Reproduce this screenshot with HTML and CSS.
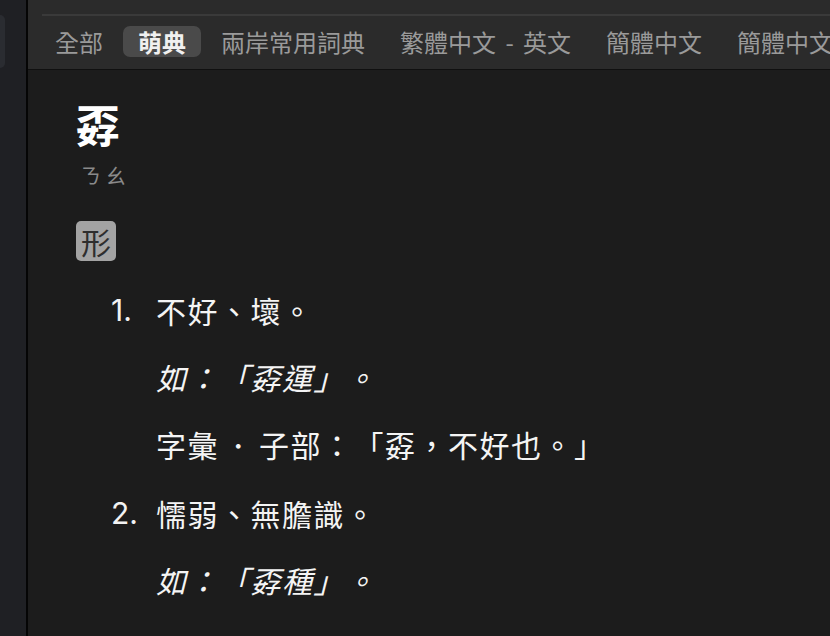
FILE: index.html
```html
<!DOCTYPE html>
<html lang="zh-Hant">
<head>
<meta charset="utf-8">
<title>孬 - 萌典</title>
<link rel="stylesheet" href="styles.css">
</head>
<body>
<div class="app">
  <aside class="sidebar">
    <div class="side-item"></div>
  </aside>
  <main class="main">
    <header class="toolbar">
      <div class="rule"></div>
      <nav class="tabs">
        <span class="tab">全部</span>
        <span class="tab active">萌典</span>
        <span class="tab">兩岸常用詞典</span>
        <span class="tab wide">繁體中文 - 英文</span>
        <span class="tab">簡體中文</span>
        <span class="tab">簡體中文</span>
      </nav>
    </header>
    <section class="content">
      <h1 class="head">孬</h1>
      <div class="zhuyin">ㄋㄠ</div>
      <div class="pos"><span class="badge">形</span></div>
      <ol class="defs">
        <li class="def">
          <span class="num">1.</span>
          <div class="def-body">
            <p class="line">不好、壞。</p>
            <p class="line ex">如：「孬運」。</p>
            <p class="line">字彙<span class="dot">·</span>子部：「孬，不好也。」</p>
          </div>
        </li>
        <li class="def">
          <span class="num">2.</span>
          <div class="def-body">
            <p class="line">懦弱、無膽識。</p>
            <p class="line ex">如：「孬種」。</p>
          </div>
        </li>
      </ol>
    </section>
  </main>
</div>
</body>
</html>
```

FILE: styles.css
```css
html, body {
  margin: 0;
  padding: 0;
  background: #1c1c1c;
}
body {
  width: 830px;
  height: 636px;
  overflow: hidden;
  font-family: "Noto Sans CJK TC", "Noto Sans", sans-serif;
  color: #f2f2f2;
  text-spacing-trim: space-all;
}
.app {
  display: flex;
  height: 636px;
}
.sidebar {
  width: 26px;
  flex: none;
  background: #1f2024;
  border-right: 2px solid #050505;
  padding-top: 15px;
}
.side-item {
  width: 5px;
  height: 53px;
  background: #2a2c31;
  border-radius: 0 8px 8px 0;
}
.main {
  flex: 1;
  display: flex;
  flex-direction: column;
  min-width: 0;
}
.toolbar {
  height: 70px;
  background: #2b2b2b;
  border-bottom: 1px solid #101010;
  padding-top: 14px;
  box-sizing: border-box;
}
.rule {
  height: 2px;
  margin-left: 14px;
  background: #3a3a3a;
}
.tabs {
  display: flex;
  gap: 5px;
  margin-top: 10px;
  padding-left: 12px;
  white-space: nowrap;
}
.tab {
  flex: none;
  padding: 0 15px;
  height: 31px;
  line-height: 31px;
  font-size: 24px;
  color: #9a9a9a;
  border-radius: 7px;
}
.tab.wide {
  word-spacing: 4px;
}
.tab.active {
  background: #4a4a4a;
  color: #f0f0f0;
  font-weight: 700;
}
.content {
  padding: 26px 0 0 48px;
}
.head {
  margin: 0;
  font-size: 44px;
  line-height: 56px;
  font-weight: 700;
  color: #ffffff;
}
.zhuyin {
  margin-top: 8px;
  padding-left: 4px;
  font-size: 21px;
  line-height: 28px;
  color: #8a8a8a;
  letter-spacing: 4px;
}
.pos {
  display: flex;
  height: 40px;
  margin-top: 33px;
}
.badge {
  width: 40px;
  height: 40px;
  line-height: 40px;
  text-align: center;
  font-size: 30px;
  background: #a3a3a3;
  color: #2e2e2e;
  border-radius: 5px;
}
.defs {
  list-style: none;
  margin: 16px 0 0 0;
  padding: 0 0 0 36px;
}
.def {
  display: flex;
}
.def + .def {
  margin-top: 2px;
}
.num {
  width: 45px;
  flex: none;
  font-family: "Inter", "Noto Sans", sans-serif;
  font-size: 30px;
  line-height: 67px;
  margin-left: -1px;
}
.def-body {
  flex: 1;
}
.line {
  margin: 0;
  font-size: 30px;
  line-height: 67px;
  letter-spacing: 1.5px;
  color: #f4f4f4;
}
.line.ex {
  font-style: italic;
}
.dot {
  display: inline-block;
  width: 40px;
  text-align: center;
  font-size: 22px;
  line-height: 1;
  vertical-align: 3px;
}
```
